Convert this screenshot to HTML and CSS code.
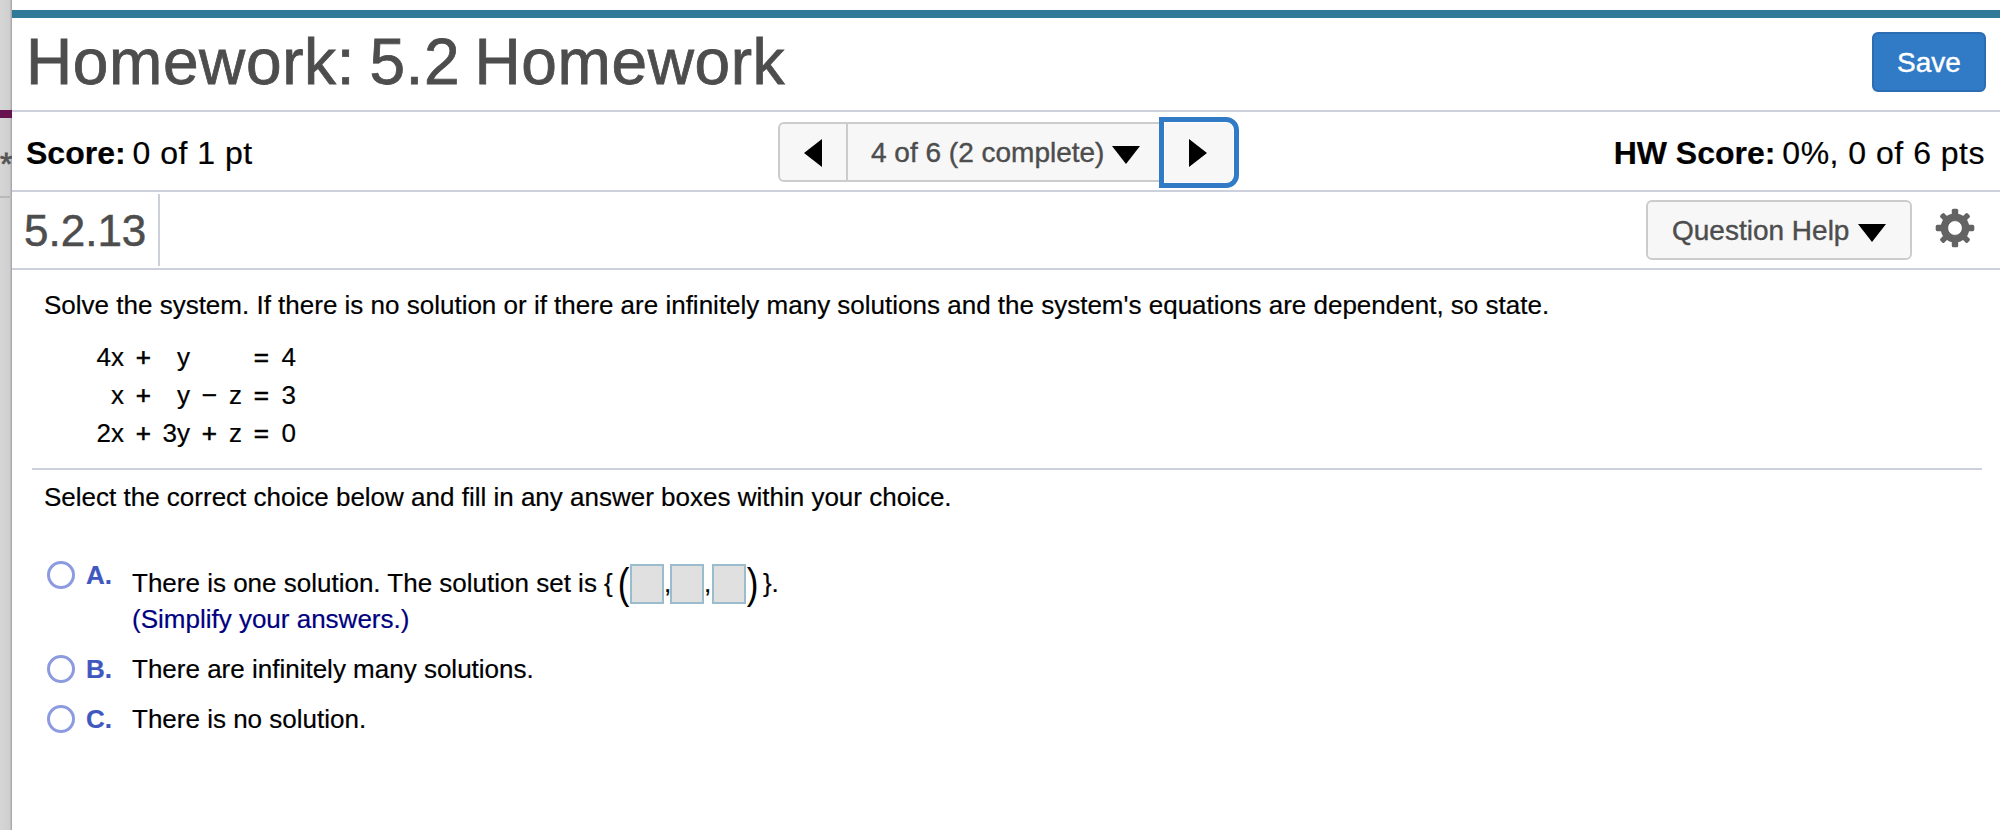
FILE: index.html
```html
<!DOCTYPE html>
<html lang="en">
<head>
    <meta charset="UTF-8">
    <meta name="viewport" content="width=device-width, initial-scale=1.0">
    <title>Homework: 5.2 Homework</title>
    <link rel="stylesheet" href="styles.css">
</head>
<body>
    <aside class="backdrop">
        <div class="backdrop-bar"></div>
        <div class="backdrop-row">*</div>
    </aside>
    <main class="player">
        <header class="title-bar">
            <h1>Homework: 5.2 Homework</h1>
            <button class="btn btn-save">Save</button>
        </header>
        <div class="score-bar">
            <div class="score"><b>Score:</b> <span>0 of 1 pt</span></div>
            <nav class="pager">
                <button class="btn btn-prev"><i class="tri tri-left"></i></button>
                <button class="btn btn-list">4 of 6 (2 complete)<i class="tri tri-down"></i></button>
                <button class="btn btn-next"><i class="tri tri-right"></i></button>
            </nav>
            <div class="score hw-score"><b>HW Score:</b> <span>0%, 0 of 6 pts</span></div>
        </div>
        <div class="question-bar">
            <h2>5.2.13</h2>
            <div class="tools">
                <button class="btn btn-help">Question Help<i class="tri tri-down"></i></button>
                <svg class="gear" viewBox="-20 -20 40 40" width="40" height="40">
                    <g fill="#636363">
                        <rect x="-3.2" y="-19.3" width="6.4" height="38.6" rx="1.6"/>
                        <rect x="-19.3" y="-3.2" width="38.6" height="6.4" rx="1.6"/>
                        <g transform="rotate(45)">
                            <rect x="-2.8" y="-19.3" width="5.6" height="38.6" rx="1.6"/>
                            <rect x="-19.3" y="-2.8" width="38.6" height="5.6" rx="1.6"/>
                        </g>
                        <circle r="14.4"/>
                    </g>
                    <circle r="7.4" fill="#fff" stroke="#505050" stroke-width="0.8"/>
                </svg>
            </div>
        </div>
        <section class="question">
            <p class="prompt">Solve the system. If there is no solution or if there are infinitely many solutions and the system's equations are dependent, so state.</p>
            <div class="equations">
                <span>4x</span><span class="op">+</span><span>y</span><span></span><span></span><span class="op">=</span><span>4</span>
                <span>x</span><span class="op">+</span><span>y</span><span class="op">−</span><span>z</span><span class="op">=</span><span>3</span>
                <span>2x</span><span class="op">+</span><span>3y</span><span class="op">+</span><span>z</span><span class="op">=</span><span>0</span>
            </div>
            <hr>
            <p class="prompt">Select the correct choice below and fill in any answer boxes within your choice.</p>
            <div class="choices">
                <div class="choice choice-a">
                    <span class="radio"></span>
                    <b>A.</b>
                    <div class="choice-text">
                        <div class="solution">
                            <span class="lead">There is one solution. The solution set is</span>
                            <span class="brace">{</span>
                            <span class="paren">(</span>
                            <span class="box"></span><span class="comma">,</span><span class="box"></span><span class="comma comma-wide">,</span><span class="box"></span>
                            <span class="paren">)</span>
                            <span class="close">}.</span>
                        </div>
                        <div class="hint">(Simplify your answers.)</div>
                    </div>
                </div>
                <div class="choice">
                    <span class="radio"></span>
                    <b>B.</b>
                    <div class="choice-text">There are infinitely many solutions.</div>
                </div>
                <div class="choice">
                    <span class="radio"></span>
                    <b>C.</b>
                    <div class="choice-text">There is no solution.</div>
                </div>
            </div>
        </section>
    </main>
</body>
</html>
```

FILE: styles.css
```css
* {
    box-sizing: border-box;
}
body, html {
    margin: 0;
    padding: 0;
    height: 100%;
    overflow: hidden;
}
body {
    display: flex;
    background: #fff;
    color: #000;
    font-family: "Liberation Sans", Arial, sans-serif;
    font-size: 26px;
    -webkit-text-stroke: 0.2px;
}
h1, h2, p {
    margin: 0;
    font-weight: normal;
}

/* page showing behind the window */
.backdrop {
    width: 12px;
    height: 830px;
    padding-top: 110px;
    overflow: hidden;
    background: linear-gradient(to right, #d6d6d6, #cfcfcf 80%, #a0a0a0);
}
.backdrop-bar {
    height: 8px;
    background: #66134f;
}
.backdrop-row {
    height: 80px;
    padding-top: 28px;
    border-bottom: 2px solid #b9b9b9;
    color: #555;
    font-size: 32px;
    line-height: 36px;
    -webkit-text-stroke: 0.8px;
}

.player {
    flex: 1;
    padding-top: 10px;
    background: #fff;
}
.title-bar {
    display: flex;
    justify-content: space-between;
    height: 102px;
    padding: 14px 14px 0 14px;
    border-top: 8px solid #307999;
    border-bottom: 2px solid #ccd0dc;
}
h1 {
    color: #4d4d4d;
    font-size: 64px;
    line-height: 60px;
    letter-spacing: 0.6px;
    word-spacing: -4px;
    -webkit-text-stroke: 0.8px;
}

.btn {
    display: flex;
    align-items: center;
    height: 60px;
    padding: 1px 0 0;
    border: 2px solid #ccc;
    background: #f7f7f7;
    color: #4d4d4d;
    font-family: inherit;
    font-size: 28px;
    -webkit-text-stroke: 0.4px;
}
.btn-save {
    width: 114px;
    justify-content: center;
    border-color: #2c6cb3;
    border-radius: 6px;
    background: #317ac6;
    color: #fff;
}
.tri {
    border: 0 solid transparent;
}
.tri-left {
    border-width: 14px 18px 14px 0;
    border-right-color: #000;
}
.tri-right {
    border-width: 14px 0 14px 18px;
    border-left-color: #000;
}
.tri-down {
    margin: 4px 0 0 8px;
    border-width: 18px 14px 0 14px;
    border-top-color: #000;
}

.score-bar {
    display: grid;
    grid-template-columns: 766px 461px 1fr;
    align-items: center;
    height: 80px;
    border-bottom: 2px solid #ccd0dc;
}
.score {
    padding: 4px 0 0 14px;
    font-size: 32px;
    line-height: 40px;
    white-space: nowrap;
}
.score span {
    margin-left: -2px;
    letter-spacing: 0.5px;
}
.hw-score {
    padding: 4px 15px 0 0;
    text-align: right;
}
.pager {
    display: flex;
    align-items: center;
    height: 60px;
    margin-top: 2px;
}
.btn-prev {
    width: 70px;
    padding-left: 24px;
    border-radius: 6px 0 0 6px;
}
.btn-list {
    width: 313px;
    margin-left: -2px;
    padding-left: 23px;
    border-right: 0;
}
/* keyboard focus ring */
.btn-next {
    width: 80px;
    height: 71px;
    justify-content: center;
    padding: 1px 2px 0 0;
    border: 5px solid #317ac6;
    border-radius: 0 13px 13px 0;
    box-shadow: inset 0 0 0 1px #fff;
}

.question-bar {
    display: flex;
    justify-content: space-between;
    height: 78px;
    padding-top: 2px;
    border-bottom: 2px solid #ccd0dc;
}
h2 {
    width: 148px;
    height: 72px;
    padding-left: 12px;
    border-right: 2px solid #ccd0dc;
    color: #4d4d4d;
    font-size: 44px;
    line-height: 73px;
    -webkit-text-stroke: 0.5px;
}
.tools {
    display: flex;
    padding: 6px 25px 0 0;
    gap: 23px;
}
.btn-help {
    width: 266px;
    padding-left: 24px;
    border-radius: 6px;
}
.btn-help .tri-down {
    margin-left: 9px;
}
.gear {
    margin-top: 8px;
}

.question {
    padding: 16px 18px 0 20px;
    line-height: 38px;
}
.prompt {
    padding-left: 12px;
}
.equations {
    display: grid;
    grid-template-columns: 28px 27px 39px 27px 25px 27px 27px;
    margin: 14px 0 16px 64px;
    text-align: right;
}
.op {
    -webkit-text-stroke: 0.6px;
}
hr {
    height: 2px;
    margin: 0 0 8px;
    border: 0;
    background: #ccd0dc;
}
.choices {
    display: flex;
    flex-direction: column;
    margin-top: 40px;
    padding-left: 15px;
    gap: 12px;
}
.choice {
    display: flex;
}
.choice-a {
    height: 82px;
}
.radio {
    width: 28px;
    height: 28px;
    margin: 5px 11px 0 0;
    border: 3px solid #8c9bdf;
    border-radius: 50%;
}
.choice b {
    width: 46px;
    color: #3f57c0;
}
.solution {
    display: flex;
    height: 45px;
    padding-top: 8px;
}
.lead {
    margin-right: 7px;
}
.brace {
    width: 13px;
}
.paren {
    width: 13px;
    text-align: center;
    transform: scale(1.35, 1.65);
    -webkit-text-stroke: 0;
}
.box {
    width: 34px;
    height: 40px;
    border: 2px solid #9abccc;
    background: #e0e0e0;
}
.comma {
    width: 6px;
}
.comma-wide {
    width: 8px;
}
.close {
    margin-left: 4px;
}
.hint {
    color: #000080;
    line-height: 36px;
}
```
